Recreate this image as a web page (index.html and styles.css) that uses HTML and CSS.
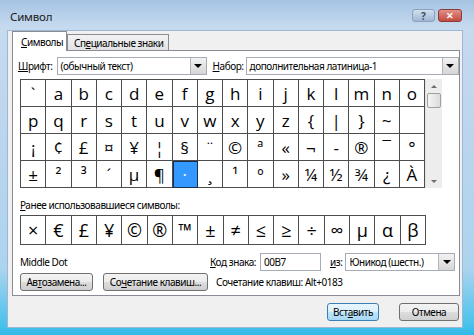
FILE: index.html
```html
<!DOCTYPE html>
<html lang="ru">
<head>
    <meta charset="UTF-8">
    <title>Символ</title>
    <link rel="stylesheet" href="styles.css">
</head>
<body>
    <div class="window">
        <div class="titlebar">
            <span class="title">Символ</span>
            <div class="caption-btns">
                <div class="cap-btn help">?</div>
                <div class="cap-btn close">✕</div>
            </div>
        </div>

        <div class="client">
            <div class="tabs">
                <div class="tab active"><u>С</u>имволы</div>
                <div class="tab">Сп<u>е</u>циальные знаки</div>
            </div>

            <div class="panel">
                <div class="font-row">
                    <span class="label"><u>Ш</u>рифт:</span>
                    <div class="combo combo-font">
                        <span>(обычный текст)</span>
                        <div class="combo-btn"></div>
                    </div>
                    <span class="label label-set"><u>Н</u>абор:</span>
                    <div class="combo combo-set">
                        <span>дополнительная латиница-1</span>
                        <div class="combo-btn"></div>
                    </div>
                </div>

                <div class="grid-wrap">
                    <div class="char-grid" id="charGrid"></div>
                    <div class="scrollbar">
                        <div class="sb-arrow up"></div>
                        <div class="sb-thumb"></div>
                        <div class="sb-space"></div>
                        <div class="sb-arrow down"></div>
                    </div>
                </div>

                <div class="recent-label"><u>Р</u>анее использовавшиеся символы:</div>
                <div class="recent-grid" id="recentGrid"></div>

                <div class="info-row">
                    <span class="char-name">Middle Dot</span>
                    <span class="label"><u>К</u>од знака:</span>
                    <div class="textbox">00B7</div>
                    <span class="label label-from"><u>и</u>з:</span>
                    <div class="combo combo-from">
                        <span>Юникод (шестн.)</span>
                        <div class="combo-btn"></div>
                    </div>
                </div>

                <div class="btn-row">
                    <div class="btn btn-auto">Ав<u>т</u>озамена...</div>
                    <div class="btn btn-keys">Со<u>ч</u>етание клавиш...</div>
                    <span class="shortcut">Сочетание клавиш: Alt+0183</span>
                </div>
            </div>

            <div class="dialog-btns">
                <div class="btn btn-default">Вст<u>а</u>вить</div>
                <div class="btn btn-cancel">Отмена</div>
            </div>
        </div>
    </div>

    <script>
        // Latin-1 supplement page as Word shows it
        const chars = [
            '`','a','b','c','d','e','f','g','h','i','j','k','l','m','n','o',
            'p','q','r','s','t','u','v','w','x','y','z','{','|','}','~','',
            '¡','¢','£','¤','¥','¦','§','¨','©','ª','«','¬','-','®','¯','°',
            '±','²','³','´','µ','¶','·','¸','¹','º','»','¼','½','¾','¿','À'
        ];
        const recent = ['×','€','£','¥','©','®','™','±','≠','≤','≥','÷','∞','µ','α','β'];

        const grid = document.getElementById('charGrid');
        chars.forEach((ch, i) => {
            const cell = document.createElement('div');
            cell.className = 'cell';
            if (i === 54) cell.classList.add('selected');
            cell.textContent = ch;
            grid.appendChild(cell);
        });

        const recentGrid = document.getElementById('recentGrid');
        recent.forEach(ch => {
            const cell = document.createElement('div');
            cell.className = 'cell';
            cell.textContent = ch;
            recentGrid.appendChild(cell);
        });
    </script>
</body>
</html>
```

FILE: styles.css
```css
* {
    box-sizing: border-box;
}

body {
    margin: 0;
    font-family: 'Noto Sans', 'Open Sans', sans-serif;
    font-size: 10px;
    letter-spacing: -0.45px;
    color: #000;
}

u {
    text-decoration: underline;
    text-underline-offset: 1px;
}

.window {
    width: 474px;
    height: 335px;
    padding: 0 11px 7px 7px;
    background: linear-gradient(to bottom, #a6c3e3 0%, #c6daef 8%, #bcd5ee 40%, #acd4ef 80%, #49c2ec 97%, #2fb8e6 100%);
}

.titlebar {
    height: 30px;
    display: flex;
    align-items: center;
    justify-content: space-between;
    padding-left: 3px;
}

.title {
    font-size: 11.5px;
    letter-spacing: -0.2px;
    color: #1a1a1a;
    margin-top: 2px;
}

.caption-btns {
    display: flex;
    gap: 3px;
    margin-top: 1px;
    margin-right: 1px;
}

.cap-btn {
    height: 13px;
    border-radius: 3px;
    display: flex;
    align-items: center;
    justify-content: center;
    font-size: 10px;
    font-weight: bold;
    letter-spacing: 0;
    color: #fff;
}

.cap-btn.help {
    width: 23px;
    background: linear-gradient(to bottom, #d3e0ee, #9fb8d3);
    border: 1px solid #8aa1bd;
    color: #3a4f6a;
}

.cap-btn.close {
    width: 24px;
    background: linear-gradient(to bottom, #e0928a, #c24a3f);
    border: 1px solid #8e3b36;
    font-size: 9px;
}

.client {
    height: 298px;
    background: #f0f0f0;
    border: 1px solid #9fb7d2;
    padding: 0 2px 0 4px;
}

.tabs {
    display: flex;
    align-items: flex-end;
    height: 19px;
    position: relative;
    z-index: 1;
}

.tab {
    height: 16px;
    padding: 0 5px 0 6px;
    border: 1px solid #898c95;
    border-bottom: none;
    background: linear-gradient(to bottom, #f3f3f3, #e2e2e2);
    display: flex;
    align-items: center;
}

.tab.active {
    height: 20px;
    width: 55px;
    background: #fff;
    padding-left: 8px;
    margin-bottom: -1px;
}

.panel {
    width: 448px;
    height: 246px;
    background: #fff;
    border: 1px solid #898c95;
    padding: 6px 0 0 5px;
}

.font-row {
    display: flex;
    align-items: center;
    height: 18px;
}

.label {
    margin-right: 4px;
    flex-shrink: 0;
}

.label-set {
    margin-left: 6px;
    margin-right: 2px;
}

.combo {
    height: 18px;
    border: 1px solid #a5acb5;
    background: #fff;
    display: flex;
    align-items: center;
    justify-content: space-between;
    padding-left: 3px;
    flex-shrink: 0;
}

.combo-font {
    width: 150px;
}

.combo-set {
    width: 213px;
}

.combo-btn {
    width: 16px;
    height: 16px;
    border-left: 1px solid #b5b5b5;
    background: linear-gradient(to bottom, #f2f2f2, #d6d6d6);
    display: flex;
    align-items: center;
    justify-content: center;
}

.combo-btn::after {
    content: '';
    border-left: 4px solid transparent;
    border-right: 4px solid transparent;
    border-top: 4px solid #000;
}

.grid-wrap {
    display: flex;
    margin: 4px 0 0 2px;
}

.char-grid {
    display: grid;
    grid-template-columns: repeat(16, 1fr);
    grid-auto-rows: 27px;
    width: 405px;
    border-left: 1px solid #4d4d4d;
    border-top: 1px solid #4d4d4d;
}

.cell {
    border-right: 1px solid #4d4d4d;
    border-bottom: 1px solid #4d4d4d;
    display: flex;
    align-items: center;
    justify-content: center;
    font-family: 'Open Sans', 'Noto Sans', sans-serif;
    letter-spacing: 0;
    font-size: 17px;
    line-height: 1;
    color: #000;
}

.cell.selected {
    background: #3399ff;
    color: #fff;
    outline: 1px solid #1b2f4a;
    outline-offset: -1px;
}

.scrollbar {
    width: 17px;
    background: #ededed;
    border-left: 1px solid #e2e2e2;
    display: flex;
    flex-direction: column;
    align-items: center;
}

.sb-arrow {
    height: 14px;
    width: 100%;
    display: flex;
    align-items: center;
    justify-content: center;
}

.sb-arrow.up::after {
    content: '';
    border-left: 3px solid transparent;
    border-right: 3px solid transparent;
    border-bottom: 3px solid #6d6d6d;
}

.sb-arrow.down::after {
    content: '';
    border-left: 3px solid transparent;
    border-right: 3px solid transparent;
    border-top: 3px solid #6d6d6d;
}

.sb-thumb {
    width: 14px;
    height: 15px;
    border: 1px solid #a0a0a0;
    border-radius: 2px;
    background: linear-gradient(to right, #f4f4f4, #dcdcdc);
}

.sb-space {
    flex: 1;
}

.recent-label {
    margin: 9px 0 0 2px;
    height: 16px;
    line-height: 16px;
}

.recent-grid {
    display: grid;
    grid-template-columns: repeat(16, 1fr);
    grid-auto-rows: 29px;
    width: 406px;
    margin: 2px 0 0 2px;
    border-left: 1px solid #4d4d4d;
    border-top: 1px solid #4d4d4d;
}

.recent-grid .cell {
    font-size: 18px;
}

.info-row {
    display: flex;
    align-items: center;
    height: 18px;
    margin: 8px 0 0 2px;
}

.char-name {
    width: 190px;
    flex-shrink: 0;
}

.textbox {
    width: 61px;
    height: 18px;
    border: 1px solid #a5acb5;
    padding-left: 3px;
    line-height: 16px;
    margin-right: 9px;
    flex-shrink: 0;
}

.label-from {
    margin-right: 3px;
}

.combo-from {
    width: 110px;
}

.btn-row {
    display: flex;
    align-items: center;
    margin: 2px 0 0 2px;
    height: 18px;
}

.btn {
    height: 18px;
    border: 1px solid #707070;
    border-radius: 3px;
    background: linear-gradient(to bottom, #f3f3f3 0%, #ebebeb 50%, #dddddd 51%, #cfcfcf 100%);
    display: flex;
    align-items: center;
    justify-content: center;
    white-space: nowrap;
}

.btn-auto {
    width: 73px;
}

.btn-keys {
    width: 105px;
    margin-left: 10px;
}

.shortcut {
    margin-left: 8px;
}

.dialog-btns {
    display: flex;
    justify-content: flex-end;
    gap: 20px;
    margin-top: 7px;
    padding-right: 1px;
}

.btn-default {
    width: 52px;
    border-color: #3c7fb1;
    background: linear-gradient(to bottom, #eaf6fd 0%, #d9f0fc 50%, #bee6fd 51%, #a7d9f5 100%);
}

.btn-cancel {
    width: 60px;
}
```
